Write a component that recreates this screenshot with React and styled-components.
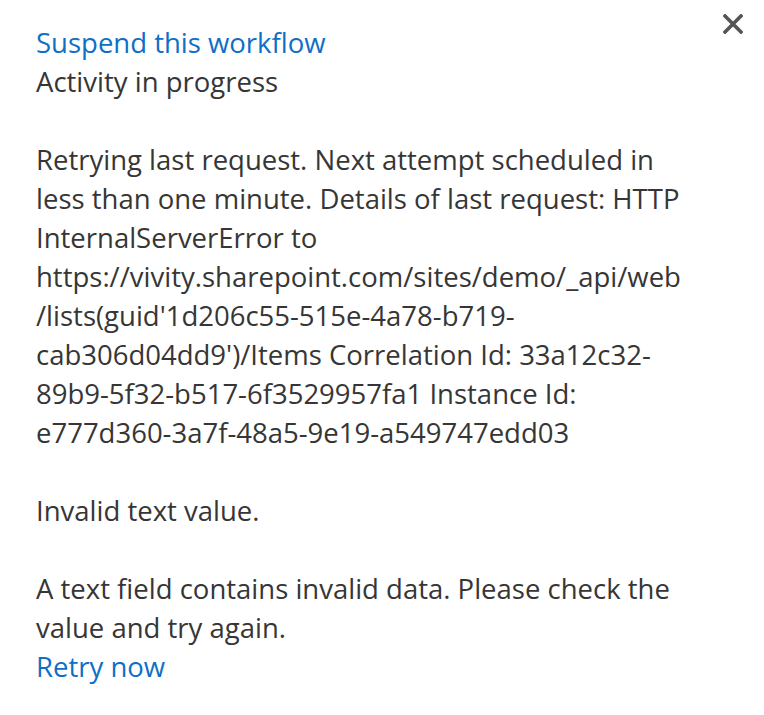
import React from 'react';
import styled, { createGlobalStyle } from 'styled-components';

const GlobalStyle = createGlobalStyle`
  html, body {
    margin: 0;
    padding: 0;
    background: #ffffff;
  }
`;

const details = [
  'Retrying last request. Next attempt scheduled in',
  'less than one minute. Details of last request: HTTP',
  'InternalServerError to',
  'https://vivity.sharepoint.com/sites/demo/_api/web',
  "/lists(guid'1d206c55-515e-4a78-b719-",
  "cab306d04dd9')/Items Correlation Id: 33a12c32-",
  '89b9-5f32-b517-6f3529957fa1 Instance Id:',
  'e777d360-3a7f-48a5-9e19-a549747edd03',
];

const hint = [
  'A text field contains invalid data. Please check the',
  'value and try again.',
];

export default function App() {
  return (
    <>
      <GlobalStyle />
      <Panel>
        <CloseButton aria-label="Close">
          <svg width="20" height="20" viewBox="0 0 20 20">
            <path d="M2 2 L18 18 M18 2 L2 18" stroke="#555" strokeWidth="3.6" strokeLinecap="square" />
          </svg>
        </CloseButton>
        <Link href="#">Suspend this workflow</Link>
        <Line>Activity in progress</Line>
        <Paragraph>
          {details.map((l) => <Line key={l}>{l}</Line>)}
        </Paragraph>
        <Paragraph>
          <Line>Invalid text value.</Line>
        </Paragraph>
        <Paragraph>
          {hint.map((l) => <Line key={l}>{l}</Line>)}
        </Paragraph>
        <Link href="#">Retry now</Link>
      </Panel>
    </>
  );
}

const Panel = styled.div`
  position: relative;
  width: 764px;
  min-height: 715px;
  box-sizing: border-box;
  padding: 23px 0 0 36px;
  font-family: "Open Sans", "Noto Sans", sans-serif;
  font-size: 27.5px;
  line-height: 39px;
  color: #363636;
`;

const Line = styled.div`
  white-space: nowrap;
`;

const Paragraph = styled.div`
  margin-top: 39px;
`;

const Link = styled.a`
  display: block;
  color: #0f6fc6;
  text-decoration: none;
  white-space: nowrap;
`;

const CloseButton = styled.button`
  position: absolute;
  top: 13px;
  right: 20px;
  width: 22px;
  height: 22px;
  padding: 0;
  border: 0;
  background: none;
  display: flex;
  align-items: center;
  justify-content: center;
  cursor: pointer;
`;
